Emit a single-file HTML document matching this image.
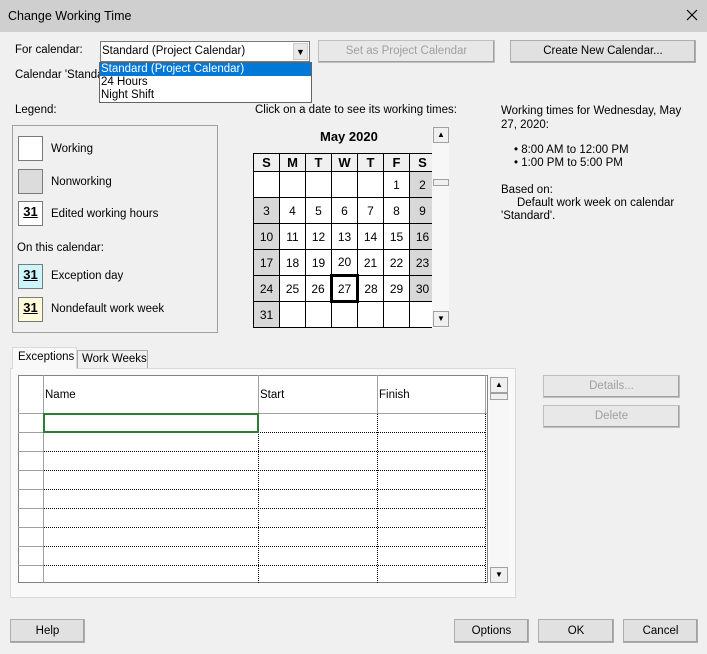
<!DOCTYPE html>
<html><head><style>
*{box-sizing:border-box;margin:0;padding:0}
body{width:707px;height:654px;background:#f0f0f0;font-family:"Liberation Sans",sans-serif;font-size:11.5px;color:#000;position:relative;overflow:hidden}
.a{position:absolute;white-space:nowrap}
.btn{position:absolute;border:1px solid #adadad;background:#e1e1e1;text-align:center;line-height:20px;box-shadow:inset -1px -1px 0 #a0a0a0}
.dis{color:#a0a0a0;border-color:#bfbfbf;background:#e8e8e8}
.sw{position:absolute;left:18px;width:25px;height:25px;border:1px solid #7a7a7a;background:#fff;font-weight:bold;text-decoration:underline;text-align:center;line-height:20px;font-size:13px}
table.cal{position:absolute;left:253px;top:153px;border-collapse:collapse;table-layout:fixed}
table.cal td{border:1px solid #000;width:26px;height:26px;text-align:center;font-size:12px;background:#fff}
table.cal tr.h td{height:18px;font-weight:bold;font-size:13px;background:#f0f0f0}
table.cal td.n{background:#d8d8d8}
.sbtn{position:absolute;width:16px;height:16px;background:#f0f0f0;border:1px solid #a0a0a0;font-size:8px;text-align:center;line-height:14px}
</style></head><body>
<div class="a" style="left:0;top:0;width:707px;height:32px;background:#cfcfcf"></div>
<div class="a" style="left:8px;top:9px;font-size:12.5px">Change Working Time</div>
<svg class="a" style="left:686px;top:9px" width="12" height="12"><path d="M1 1L11 11M11 1L1 11" stroke="#000" stroke-width="1.2"/></svg>

<div class="a" style="left:15px;top:44px">For calendar:</div>
<div class="a" style="left:100px;top:41px;width:210px;height:21px;border:1px solid #7a7a7a;background:#fff"></div>
<div class="a" style="left:102px;top:45px">Standard (Project Calendar)</div>
<div class="a" style="left:293px;top:43px;width:15px;height:17px;background:#e8e8e8;border:1px solid #ccc;font-size:9px;text-align:center;line-height:16px">▼</div>
<div class="btn dis" style="left:318px;top:40px;width:177px;height:23px">Set as Project Calendar</div>
<div class="btn" style="left:510px;top:40px;width:186px;height:23px">Create New Calendar...</div>
<div class="a" style="left:15px;top:69px">Calendar 'Standa</div>
<div class="a" style="left:99px;top:62px;width:213px;height:41px;border:1px solid #646464;background:#fff"></div>
<div class="a" style="left:100px;top:63px;width:211px;height:13px;background:#0078d7"></div>
<div class="a" style="left:101px;top:63px;color:#fff;line-height:13px">Standard (Project Calendar)</div>
<div class="a" style="left:101px;top:76px;line-height:13px">24 Hours</div>
<div class="a" style="left:101px;top:89px;line-height:13px">Night Shift</div>

<div class="a" style="left:15px;top:104px">Legend:</div>
<div class="a" style="left:12px;top:125px;width:206px;height:208px;border:1px solid #a0a0a0"></div>
<div class="sw" style="top:136px"></div><div class="a" style="left:51px;top:143px">Working</div>
<div class="sw" style="top:169px;background:#dcdcdc"></div><div class="a" style="left:51px;top:176px">Nonworking</div>
<div class="sw" style="top:201px">31</div><div class="a" style="left:51px;top:208px">Edited working hours</div>
<div class="a" style="left:17px;top:242px">On this calendar:</div>
<div class="sw" style="top:264px;background:#ccf6fb">31</div><div class="a" style="left:51px;top:270px">Exception day</div>
<div class="sw" style="top:297px;background:#fffbd8">31</div><div class="a" style="left:51px;top:303px">Nondefault work week</div>

<div class="a" style="left:255px;top:104px">Click on a date to see its working times:</div>
<div class="a" style="left:320px;top:129px;font-weight:bold;font-size:13px">May 2020</div>
<table class="cal">
<tr class="h"><td>S</td><td>M</td><td>T</td><td>W</td><td>T</td><td>F</td><td style="width:23px">S</td></tr>
<tr><td></td><td></td><td></td><td></td><td></td><td>1</td><td class="n">2</td></tr>
<tr><td class="n">3</td><td>4</td><td>5</td><td>6</td><td>7</td><td>8</td><td class="n">9</td></tr>
<tr><td class="n">10</td><td>11</td><td>12</td><td>13</td><td>14</td><td>15</td><td class="n">16</td></tr>
<tr><td class="n">17</td><td>18</td><td>19</td><td>20</td><td>21</td><td>22</td><td class="n">23</td></tr>
<tr><td class="n">24</td><td>25</td><td>26</td><td style="border:3px solid #000">27</td><td>28</td><td>29</td><td class="n">30</td></tr>
<tr><td class="n">31</td><td></td><td></td><td></td><td></td><td></td><td></td></tr>
</table>
<div class="a" style="left:432px;top:127px;width:17px;height:201px;background:#f7f7f7"></div>
<div class="sbtn" style="left:433px;top:127px">▲</div>
<div class="a" style="left:433px;top:179px;width:16px;height:7px;border:1px solid #a0a0a0;background:#f0f0f0"></div>
<div class="sbtn" style="left:433px;top:311px">▼</div>

<div class="a" style="left:501px;top:104px;line-height:14px;white-space:normal;width:185px">Working times for Wednesday, May 27, 2020:</div>
<div class="a" style="left:514px;top:144px;line-height:13px">• 8:00 AM to 12:00 PM<br>• 1:00 PM to 5:00 PM</div>
<div class="a" style="left:501px;top:184px;line-height:13px">Based on:<br>&nbsp;&nbsp;&nbsp;&nbsp;&nbsp;Default work week on calendar<br>'Standard'.</div>

<div class="a" style="left:10px;top:368px;width:506px;height:230px;border:1px solid #d9d9d9;background:#f9f9f9"></div>
<div class="a" style="left:12px;top:347px;width:65px;height:22px;border:1px solid #d9d9d9;border-bottom:none;background:#f9f9f9;padding:3px 0 0 5px">Exceptions</div>
<div class="a" style="left:77px;top:350px;width:71px;height:18px;border:1px solid #adadad;border-bottom:none;background:#f0f0f0;padding:2px 0 0 4px">Work Weeks</div>
<div class="a" style="left:18px;top:375px;width:470px;height:208px;border:1px solid #828282;background:#fff"></div>
<svg class="a" style="left:18px;top:375px" width="470" height="208">
<g stroke="#a0a0a0"><line x1="25.5" y1="0" x2="25.5" y2="208"/><line x1="240.5" y1="0" x2="240.5" y2="38"/><line x1="359.5" y1="0" x2="359.5" y2="38"/><line x1="467.5" y1="0" x2="467.5" y2="38"/><line x1="0" y1="38.5" x2="470" y2="38.5"/></g>
<g stroke="#a0a0a0"><line x1="0" y1="57.5" x2="25" y2="57.5"/><line x1="0" y1="76.5" x2="25" y2="76.5"/><line x1="0" y1="95.5" x2="25" y2="95.5"/><line x1="0" y1="114.5" x2="25" y2="114.5"/><line x1="0" y1="133.5" x2="25" y2="133.5"/><line x1="0" y1="152.5" x2="25" y2="152.5"/><line x1="0" y1="171.5" x2="25" y2="171.5"/><line x1="0" y1="190.5" x2="25" y2="190.5"/></g>
<g stroke="#000" stroke-dasharray="1,1"><line x1="26" y1="57.5" x2="468" y2="57.5"/><line x1="26" y1="76.5" x2="468" y2="76.5"/><line x1="26" y1="95.5" x2="468" y2="95.5"/><line x1="26" y1="114.5" x2="468" y2="114.5"/><line x1="26" y1="133.5" x2="468" y2="133.5"/><line x1="26" y1="152.5" x2="468" y2="152.5"/><line x1="26" y1="171.5" x2="468" y2="171.5"/><line x1="26" y1="190.5" x2="468" y2="190.5"/>
<line x1="240.5" y1="39" x2="240.5" y2="208"/><line x1="359.5" y1="39" x2="359.5" y2="208"/><line x1="467.5" y1="39" x2="467.5" y2="208"/></g>
<rect x="26" y="39" width="214" height="18" fill="#fff" stroke="#2e7d32" stroke-width="2"/>
</svg>
<div class="a" style="left:45px;top:389px">Name</div>
<div class="a" style="left:260px;top:389px">Start</div>
<div class="a" style="left:379px;top:389px">Finish</div>
<div class="a" style="left:489px;top:375px;width:20px;height:208px;background:#f7f7f7"></div>
<div class="sbtn" style="left:490px;top:377px;width:18px">▲</div>
<div class="a" style="left:490px;top:393px;width:18px;height:7px;border:1px solid #a0a0a0;background:#f0f0f0"></div>
<div class="sbtn" style="left:490px;top:567px;width:18px">▼</div>

<div class="btn dis" style="left:543px;top:375px;width:137px;height:23px">Details...</div>
<div class="btn dis" style="left:543px;top:405px;width:137px;height:23px">Delete</div>

<div class="btn" style="left:10px;top:619px;width:75px;height:24px;line-height:22px">Help</div>
<div class="btn" style="left:454px;top:619px;width:75px;height:24px;line-height:22px">Options</div>
<div class="btn" style="left:538px;top:619px;width:76px;height:24px;line-height:22px">OK</div>
<div class="btn" style="left:623px;top:619px;width:75px;height:24px;line-height:22px">Cancel</div>
</body></html>
